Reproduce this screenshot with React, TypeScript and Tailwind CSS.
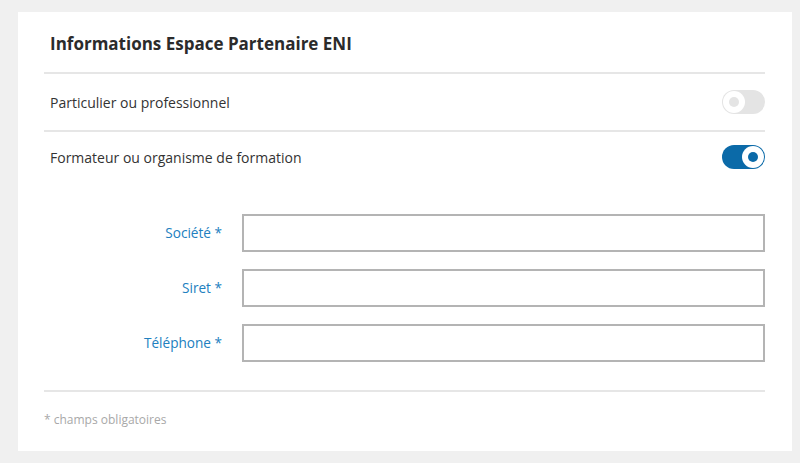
import { useState } from "react";

function Toggle({ on, onClick }: { on: boolean; onClick: () => void }) {
  return (
    <button
      type="button"
      onClick={onClick}
      className={`flex h-[24px] w-[43px] items-center rounded-full p-[1px] ${
        on ? "justify-end bg-[#0b6aa8]" : "justify-start bg-[#e4e4e4]"
      }`}
    >
      <span className="flex h-[22px] w-[22px] items-center justify-center rounded-full bg-white">
        <span className={`h-[10px] w-[10px] rounded-full ${on ? "bg-[#0b6aa8]" : "bg-[#e4e4e4]"}`} />
      </span>
    </button>
  );
}

const fields = ["Société *", "Siret *", "Téléphone *"];

export default function App() {
  const [particulier, setParticulier] = useState(false);
  const [formateur, setFormateur] = useState(true);

  return (
    <div
      className="min-h-[463px] bg-[#f0f0f0] pl-[18px] pr-[8px] pt-[12px] pb-[12px]"
      style={{ fontFamily: '"Open Sans", sans-serif' }}
    >
      <div className="bg-white pl-[26px] pr-[27px] pt-[20px] pb-[22px]">
        <h1 className="pl-[6px] text-[17px] font-bold leading-[24px] text-[#2b2b2b] pb-[16px] border-b-2 border-[#e6e6e6]">
          Informations Espace Partenaire ENI
        </h1>

        <div className="flex h-[58px] items-center justify-between border-b-2 border-[#e6e6e6]">
          <span className="pl-[6px] text-[14px] text-[#333]">Particulier ou professionnel</span>
          <Toggle on={particulier} onClick={() => setParticulier(!particulier)} />
        </div>

        <div className="flex h-[50px] items-center justify-between">
          <span className="pl-[6px] text-[14px] text-[#333]">Formateur ou organisme de formation</span>
          <Toggle on={formateur} onClick={() => setFormateur(!formateur)} />
        </div>

        <div className="mt-[32px] flex flex-col gap-[17px]">
          {fields.map((f) => (
            <div key={f} className="flex items-center">
              <label className="w-[178px] text-right text-[13.6px] text-[#2180c0]">{f}</label>
              <input className="ml-[20px] h-[38px] flex-1 border-2 border-[#b4b4b4] bg-white px-2 text-[14px] outline-none" />
            </div>
          ))}
        </div>

        <div className="mt-[28px] border-t-2 border-[#e6e6e6] pt-[19px]">
          <p className="text-[12px] leading-[18px] text-[#a8a8a8]">* champs obligatoires</p>
        </div>
      </div>
    </div>
  );
}
